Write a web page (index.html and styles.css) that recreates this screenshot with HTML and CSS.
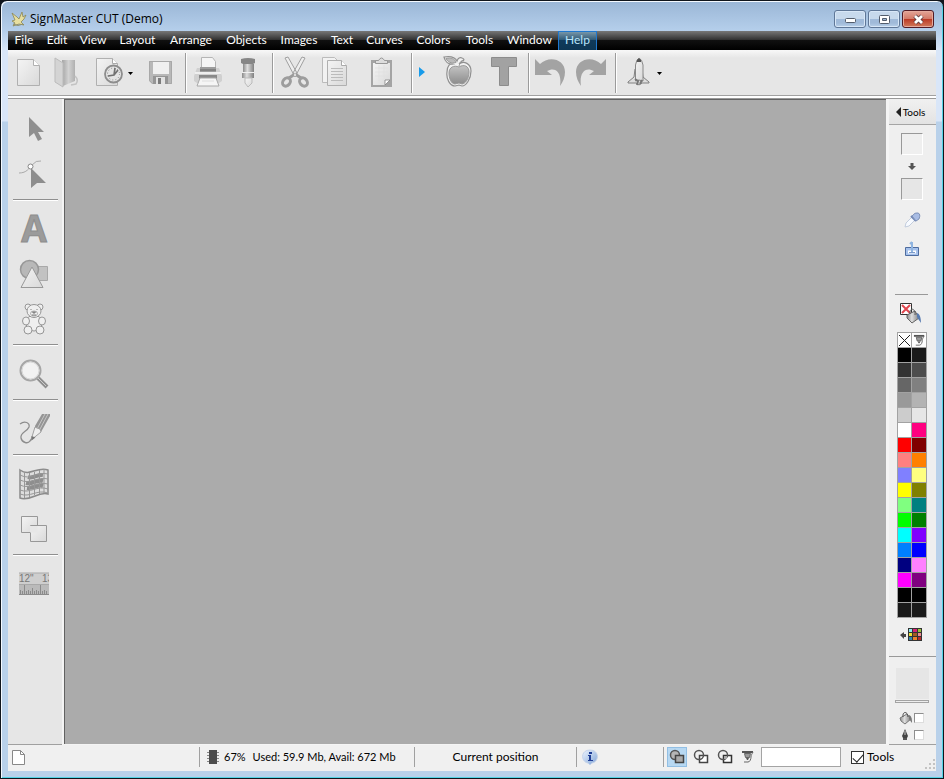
FILE: index.html
```html
<!DOCTYPE html>
<html lang="en">
<head>
<meta charset="utf-8">
<title>SignMaster CUT (Demo)</title>
<link rel="stylesheet" href="styles.css">
</head>
<body>
<svg class="defs" width="0" height="0" aria-hidden="true">
  <defs>
    <linearGradient id="paper" x1="0" y1="0" x2="1" y2="1"><stop offset="0" stop-color="#f4f4f4"/><stop offset="1" stop-color="#d9d9d9"/></linearGradient>
    <linearGradient id="metal" x1="0" y1="0" x2="0" y2="1"><stop offset="0" stop-color="#c4c4c4"/><stop offset="1" stop-color="#8c8c8c"/></linearGradient>
    <linearGradient id="steel" x1="0" y1="0" x2="1" y2="0"><stop offset="0" stop-color="#8a8a8a"/><stop offset=".4" stop-color="#dedede"/><stop offset="1" stop-color="#808080"/></linearGradient>
    <linearGradient id="fold" x1="0" y1="0" x2="1" y2="0"><stop offset="0" stop-color="#a4a4a4"/><stop offset=".5" stop-color="#d2d2d2"/><stop offset="1" stop-color="#b0b0b0"/></linearGradient>
    <linearGradient id="sky" x1="0" y1="0" x2="1" y2="1"><stop offset="0" stop-color="#eef5ff"/><stop offset="1" stop-color="#7fa3d6"/></linearGradient>
    <symbol id="nozzle" viewBox="0 0 14 14"><path d="M1 1h11v2H1z" fill="#555"/><path d="M3.500 3.500h6l-1 4h-4z" fill="#999" stroke="#666"/><path d="M5 8h3l-1 2H6z" fill="#555"/><path d="M12 2c-1 2-2 3-2 5s-1 5-3 5H3" fill="none" stroke="#666"/></symbol>
    <symbol id="bucket" viewBox="0 0 18 16"><path d="M3 7l8-4 4 7-7 5-5-5z" fill="url(#steel)" stroke="#666"/><path d="M6 6c-1-7 6-6 5 1" fill="none" stroke="#555"/><path d="M13 5c3 1 4 5 4 10-2-3-3-4-4-6z" fill="#587bb0"/></symbol>
    <symbol id="bucket-gray" viewBox="0 0 14 14"><path d="M1 7l7-4 4 5-6 5-4-3z" fill="url(#steel)" stroke="#777"/><path d="M4 6c-1-6 5-6 5 0" fill="none" stroke="#555"/><path d="M10 4c3 1 3 5 3 8l-3-4z" fill="#777"/></symbol>
  </defs>
</svg>

<div class="window">
  <header class="titlebar">
    <svg class="app-icon" width="16" height="16" viewBox="0 0 16 16" aria-hidden="true"><path d="M1 2l5 4 2 2 3-7 1 5 3-2-2 4-3 3 3 3-5-1-6 2 2-3-3-2 3-1z" fill="#e8dfa0" stroke="#8c8753" stroke-width=".8"/><path d="M2 13q5 3 10 0" fill="none" stroke="#8f906e"/></svg>
    <h1>SignMaster CUT (Demo)</h1>
    <div class="window-buttons">
      <button type="button" aria-label="Minimize"><svg width="13" height="9" viewBox="0 0 13 9"><rect x="1.500" y="3.500" width="10" height="4" rx="1" fill="#fff" stroke="#535d6c"/></svg></button>
      <button type="button" aria-label="Maximize"><svg width="13" height="9" viewBox="0 0 13 9"><rect x="1.500" y=".5" width="10" height="8" rx="1" fill="#fff" stroke="#535d6c"/><path d="M4.500 3.500h4v2h-4z" fill="#9db6d4" stroke="#535d6c"/></svg></button>
      <button type="button" class="close" aria-label="Close"><svg width="13" height="11" viewBox="0 0 13 11"><path d="M3 2l7 7M10 2L3 9" stroke="#5b3a3e" stroke-width="4.500"/><path d="M3 2l7 7M10 2L3 9" stroke="#fff" stroke-width="2.800"/></svg></button>
    </div>
  </header>

  <nav class="menubar" aria-label="Main menu">
    <button type="button">File</button><button type="button">Edit</button><button type="button">View</button><button type="button">Layout</button><button type="button">Arrange</button><button type="button">Objects</button><button type="button">Images</button><button type="button">Text</button><button type="button">Curves</button><button type="button">Colors</button><button type="button">Tools</button><button type="button">Window</button><button type="button" class="active">Help</button>
  </nav>

  <div class="toolbar" role="toolbar" aria-label="Standard">
    <div class="group g-file">
      <button type="button" aria-label="New"><svg width="28" height="32" viewBox="0 0 28 32"><path d="M3.500 3.500h16l6 6v20h-22z" fill="url(#paper)" stroke="#b0b0b0"/><path d="M19.500 3.500v6h6" fill="#fff" stroke="#b0b0b0"/></svg></button>
      <button type="button" aria-label="Open"><svg width="28" height="32" viewBox="0 0 28 32"><path d="M10 4l13 0v21l-12 5z" fill="url(#fold)"/><path d="M3 2l8 5v24l-8-5z" fill="#d4d4d4" stroke="#bbb"/><path d="M23 20q4 4 1 8l-5 1" fill="none" stroke="#c3c3c3" stroke-width="1.500"/></svg></button>
      <button type="button" aria-label="Recent files"><svg width="44" height="32" viewBox="0 0 44 32"><path d="M4.500 2.500h16l5 5v22h-21z" fill="url(#paper)" stroke="#b0b0b0"/><path d="M20.500 2.500v5h5" fill="#fff" stroke="#aaa"/><circle cx="21.500" cy="18" r="8.500" fill="#e3e3e3" stroke="#8d8d8d" stroke-width="1.800"/><circle cx="21.500" cy="18" r="6" fill="none" stroke="#888" stroke-dasharray="1 2.140"/><path d="M16 20l6-1 4-5M22 19l1-7" fill="none" stroke="#707070" stroke-width="1.700"/><path d="M36 16h5l-2.500 3z" fill="#000"/></svg></button>
      <button type="button" aria-label="Save"><svg width="26" height="32" viewBox="0 0 26 32"><path d="M2 5h23v23H5l-3-3z" fill="#b8b8b8"/><path d="M2.500 5.500h22v22h-19l-3-3z" fill="none" stroke="#a8a8a8"/><path d="M6 6h16v12H6z" fill="#f0f0f0"/><path d="M6 20h15v8H6z" fill="#959595"/><path d="M9 21h9v7H9z" fill="#e2e2e2"/><path d="M11 22h3v6h-3z" fill="#7b7b7b"/></svg></button>
    </div>
    <div class="group g-print">
      <button type="button" aria-label="Print"><svg width="28" height="32" viewBox="0 0 28 32"><path d="M7.500 1.500h11l3 4v8h-14z" fill="#f5f5f5" stroke="#b5b5b5"/><path d="M3 12h22l3 8v5l-3 2H3l-3-2v-5z" fill="#d0d0d0"/><path d="M6 11h16v5H6z" fill="#9d9d9d"/><path d="M6 13h16v2H6z" fill="#818181"/><path d="M1 17h26" stroke="#efefef" stroke-width="2"/><path d="M5 19h18v5H5z" fill="#898989"/><path d="M6 22h16l3 8H3z" fill="#f5f5f5" stroke="#a8a8a8"/><path d="M8 25h12" stroke="#ddd"/></svg></button>
      <button type="button" aria-label="Cut job"><svg width="20" height="32" viewBox="0 0 20 32"><path d="M3 3q7-2 14 0v4l-2 1H5L3 7z" fill="#868686"/><path d="M5 8h11v8H5z" fill="url(#steel)"/><path d="M4 16h12v6H4z" fill="url(#steel)"/><path d="M4 16.500h12" stroke="#efefef"/><path d="M7 22h7v5l-4 4-3-4z" fill="url(#paper)" stroke="#bbb"/></svg></button>
    </div>
    <div class="group g-edit">
      <button type="button" aria-label="Cut"><svg width="30" height="34" viewBox="0 0 30 34"><path d="M5 3l3-1 9 16-2 4zM25 3l-3-1-9 16 2 4z" fill="#eee" stroke="#a0a0a0"/><path d="M15 19l6 4M15 19l-6 4" stroke="#9b9b9b" stroke-width="3"/><ellipse cx="6.500" cy="27" rx="3.500" ry="4.500" transform="rotate(40 6.500 27)" fill="none" stroke="#9d9d9d" stroke-width="3"/><ellipse cx="23.500" cy="27" rx="3.500" ry="4.500" transform="rotate(-40 23.500 27)" fill="none" stroke="#9d9d9d" stroke-width="3"/><circle cx="15" cy="20" r="1.200" fill="#ddd"/></svg></button>
      <button type="button" aria-label="Copy"><svg width="28" height="32" viewBox="0 0 28 32"><path d="M1.500 1.500h12l4 4v21h-16z" fill="#f2f2f2" stroke="#bbb"/><path d="M6.500 4.500h14l5 5v20h-19z" fill="url(#paper)" stroke="#b0b0b0"/><path d="M20.500 4.500v5h5" fill="#fff" stroke="#aaa"/><path d="M10 12.500h12M10 15.500h12M10 18.500h12M10 21.500h12M10 24.500h12" stroke="#bbb"/></svg></button>
      <button type="button" aria-label="Paste"><svg width="24" height="34" viewBox="0 0 24 34"><path d="M2 5h21v27H2z" fill="#a4a4a4"/><path d="M4 8h17v17l-5 5H4z" fill="url(#paper)"/><path d="M21 25h-5v5z" fill="#fff" stroke="#777" stroke-width=".7"/><path d="M6.500 5.500h3q3-5 6 0h3v3h-12z" fill="#ddd" stroke="#999"/><path d="M6 13h13M6 17h13M6 21h13M10 10v16M15 10v14" stroke="#e0e0e0" stroke-width=".7"/></svg></button>
    </div>
    <div class="group g-art">
      <button type="button" aria-label="Expand"><svg width="8" height="12" viewBox="0 0 8 12"><path d="M1 1l6 5-6 5z" fill="#189bea"/></svg></button>
      <button type="button" aria-label="Clip art"><svg width="30" height="34" viewBox="0 0 30 34"><path d="M16 9c5-4 12 0 12 7 0 8-5 15-9 15l-3-1-4 1C7 31 3 24 4 17c0-6 3-9 6-8C5 10 2 6 1 2c6-1 11 0 13 4 1-3 3-4 5-3 3 1 2 3 0 3z" fill="#f1f1f1" stroke="#909090" stroke-width="1.200"/><path d="M3 3.500c5-1 9 0 10 4-5 1-8 0-10-4z" fill="#bbb" stroke="#999"/><path d="M16 12c5-3 10-1 10 5 0 7-4 12-7 12l-3-1-4 1c-4 0-6-6-6-11 0-6 5-8 10-6z" fill="url(#metal)" stroke="#999"/><path d="M16 11q1-5 4-6" fill="none" stroke="#999"/></svg></button>
      <button type="button" aria-label="Text"><svg width="28" height="34" viewBox="0 0 28 34"><path d="M1.500 2.500h25v9h-8v19h-9v-19h-8z" fill="#a2a2a2" stroke="#8c8c8c"/></svg></button>
    </div>
    <div class="group g-history">
      <button type="button" aria-label="Undo"><svg width="32" height="32" viewBox="0 0 32 32"><path d="M1 3l5 5C15-1 31 3 31 16c0 5-2 10-5 14 2-13-4-20-13-15l5 4H1z" fill="#a3a3a3"/></svg></button>
      <button type="button" aria-label="Redo"><svg width="32" height="32" viewBox="0 0 32 32"><path d="M31 3l-5 5C17-1 1 3 1 16c0 5 2 10 5 14-2-13 4-20 13-15l-5 4h17z" fill="#a3a3a3"/></svg></button>
    </div>
    <div class="group g-launch">
      <button type="button" aria-label="Launch"><svg width="44" height="32" viewBox="0 0 44 32"><path d="M13 13l-1 8-6 5v1h8l3 2 3-2h7v-1l-6-5-1-8z" fill="#ddd" stroke="#808080"/><path d="M13.500 25V9q1-6 3.500-7 3 1 4 7v16l-4-1z" fill="url(#paper)" stroke="#888"/><path d="M15 4q2-3 4 0v2h-4z" fill="#555"/><path d="M13 23l3 2-1 4M20 24l-2 4" fill="none" stroke="#777" stroke-width="2"/><path d="M35 16h5l-2.500 3z" fill="#000"/></svg></button>
    </div>
  </div>

  <div class="workspace">
    <aside class="toolbox" aria-label="Drawing tools">
      <div class="set">
        <button type="button" aria-label="Select"><svg width="30" height="32" viewBox="0 0 30 32"><path d="M10 4v20l5-4 4 8 4-2-4-7h6z" fill="#8f8f8f"/></svg></button>
        <button type="button" aria-label="Edit nodes"><svg width="32" height="32" viewBox="0 0 32 32"><path d="M1 15c8 0 10-5 13-8q4-5 9-4" fill="none" stroke="#aaa"/><path d="M13 10v20l6-5h9z" fill="#8d8d8d"/><circle cx="12.500" cy="8.500" r="2.500" fill="#fff" stroke="#888"/></svg></button>
      </div>
      <div class="set">
        <button type="button" aria-label="Text tool"><svg width="40" height="45" viewBox="0 0 40 45"><text x="20" y="36" text-anchor="middle" class="letter">A</text></svg></button>
        <button type="button" aria-label="Shapes"><svg width="30" height="30" viewBox="0 0 30 30"><path d="M16.500 7.500h12v14h-12z" fill="#c2c2c2" stroke="#a9a9a9"/><circle cx="10.500" cy="10.500" r="9" fill="#b8b8b8" stroke="#989898" stroke-width="1.500"/><path d="M13 8L2 28.500h22z" fill="url(#paper)" stroke="#989898"/></svg></button>
        <button type="button" aria-label="Symbols"><svg width="24" height="32" viewBox="0 0 24 32"><g fill="#efefef" stroke="#969696"><circle cx="6" cy="4" r="3"/><circle cx="18" cy="4" r="3"/><ellipse cx="12" cy="20" rx="8" ry="8"/><ellipse cx="4" cy="18" rx="3.500" ry="4"/><ellipse cx="20" cy="18" rx="3.500" ry="4"/><ellipse cx="6" cy="27" rx="4" ry="4"/><ellipse cx="18" cy="27" rx="4" ry="4"/><ellipse cx="12" cy="8" rx="7" ry="6.500"/></g><ellipse cx="12" cy="10.500" rx="3.500" ry="2.500" fill="none" stroke="#aaa"/><path d="M10.500 9h3L12 10.500zM8.500 6.500h1M14.500 6.500h1M10 12h4" fill="#888" stroke="#808080"/></svg></button>
      </div>
      <div class="set">
        <button type="button" aria-label="Zoom"><svg width="32" height="32" viewBox="0 0 32 32"><path d="M20 20l9 9" stroke="#8f8f8f" stroke-width="4"/><path d="M20 20l8 8" stroke="#ccc" stroke-width="1"/><circle cx="12.500" cy="12.500" r="10" fill="#f2f2f2" stroke="#a6a6a6" stroke-width="2"/><circle cx="12.500" cy="12.500" r="8.500" fill="none" stroke="#d5d5d5"/></svg></button>
      </div>
      <div class="set">
        <button type="button" aria-label="Freehand"><svg width="32" height="32" viewBox="0 0 32 32"><path d="M2 11c5-4 10-1 9 3-2 5-9 5-8 11 1 5 7 6 9 3l3-4" fill="none" stroke="#8d8d8d" stroke-width="1.300"/><path d="M17 13L24 1h8v2l-9 16-6-2z" fill="#959595"/><path d="M27 1l-8 15M30 1l-9 17" stroke="#c6c6c6"/><path d="M17 14l-4 13 10-8-1-3-3-1z" fill="#eee" stroke="#a0a0a0"/><path d="M13.500 23v4.500l4-3z" fill="#777"/></svg></button>
      </div>
      <div class="set">
        <button type="button" aria-label="Distort"><svg width="32" height="32" viewBox="0 0 32 32"><path d="M2 2c10 7 17-4 28 0v24c-10-3-18 8-28 4z" fill="#dedede" stroke="#8b8b8b" stroke-width="1.500"/><path d="M10 9c6 2 9-3 15-2M8 15c7 2 11-4 17-2M9 20c7 1 10-4 16-2" fill="none" stroke="#8e8e8e" stroke-width="4"/><path d="M2 7c11 6 17-4 28-1M2 12c10 5 17-4 28-1M2 17c10 5 17-4 28-1M2 22c10 4 17-5 28-1M2 26c10 4 17-5 28-1M6.500 4v26M11.500 5v24M16.500 4v23M21.500 2v24M26 1v24" fill="none" stroke="#979797"/></svg></button>
        <button type="button" aria-label="Weld"><svg width="30" height="30" viewBox="0 0 30 30"><path d="M2.500 2.500h16v16h-16z" fill="url(#paper)" stroke="#989898"/><path d="M11.500 11.500h16v16h-16z" fill="url(#paper)" stroke="#989898"/><path d="M11 12v6.500h7.500V12z" fill="#e7e7e7"/></svg></button>
      </div>
      <div class="set last">
        <button type="button" aria-label="Measure"><svg width="30" height="24" viewBox="0 0 30 24"><path d="M0 1h30v22H0z" fill="#cecece"/><path d="M0 1h30M0 12.500h30" stroke="#a9a9a9"/><path d="M0 13h30v10H0z" fill="#bababa"/><text x="0" y="10" class="ruler-text">12"</text><text x="23" y="10" class="ruler-text">13</text><path d="M1.500 18v4M3.500 19v3M5.500 13v9M7.500 19v3M9.500 18v4M11.500 19v3M13.500 16v6M15.500 19v3M17.500 18v4M19.500 19v3M21.500 13v9M23.500 19v3M25.500 18v4M27.500 19v3M0 22.500h30" stroke="#8b8b8b"/></svg></button>
      </div>
    </aside>

    <main class="canvas" aria-label="Drawing area"></main>

    <aside class="palette-panel" aria-label="Color tools">
      <button type="button" class="panel-title"><svg width="5" height="10" viewBox="0 0 5 10"><path d="M5 0v10L0 5z" fill="#222"/></svg>Tools</button>
      <div class="pick">
        <button type="button" class="well" aria-label="Outline color"></button>
        <svg width="10" height="9" viewBox="0 0 10 9" aria-hidden="true"><path d="M3.500 1h3v3H9L5 8 1 4h2.500z" fill="#555"/></svg>
        <button type="button" class="well filled" aria-label="Fill color"></button>
        <button type="button" class="tool" aria-label="Eyedropper"><svg width="18" height="18" viewBox="0 0 18 18"><path d="M2 16l1-4 6-6 3 3-6 6z" fill="#f7faff" stroke="#c3cddd"/><path d="M8 5l5 5" stroke="#7186b5" stroke-width="2"/><path d="M9 5q3-4 6-3t1 6l-3 2z" fill="#a8bce4" stroke="#7f92b8"/></svg></button>
        <button type="button" class="tool" aria-label="Swap colors"><svg width="16" height="16" viewBox="0 0 16 16"><path d="M1.500 6.500h13v8h-13z" fill="#a5c1ec" stroke="#4e6c9e"/><path d="M4 11h8" stroke="#fff" stroke-width="3"/><path d="M8 1v10M6 3l2-2" stroke="#8fb4e0" stroke-width="2"/><path d="M5 11.500h6" stroke="#7b9bcb"/></svg></button>
      </div>
      <div class="fill-tools">
        <button type="button" class="tool" aria-label="No fill"><svg width="24" height="24" viewBox="0 0 24 24"><path d="M1.500 1.500h11v11h-11z" fill="#fff" stroke="#333"/><path d="M3 3l8 8M11 3l-8 8" stroke="#e0454e" stroke-width="2"/><use href="#bucket" x="5" y="6" width="18" height="16"/></svg></button>
        <div class="swatches" id="swatches">
          <button type="button" aria-label="None"><svg width="13" height="13" viewBox="0 0 13 13"><path d="M1 1l11 11M12 1L1 12" stroke="#222"/></svg></button>
          <button type="button" aria-label="Contour"><svg width="13" height="13"><use href="#nozzle"/></svg></button>
        </div>
        <button type="button" class="tool more" aria-label="More colors"><svg width="22" height="14" viewBox="0 0 22 14"><path d="M0 7l4-3v2h2v3H4v2z" fill="#444"/><path d="M8 0h14v13H8z" fill="#333"/><path d="M9 1h3v3H9z" fill="#8ee8ee"/><path d="M13 1h4v3h-4z" fill="#d42470"/><path d="M18 1h3v3h-3z" fill="#9ac43e"/><path d="M9 5h3v3H9z" fill="#eee334"/><path d="M13 5h4v3h-4z" fill="#a05d24"/><path d="M18 5h3v3h-3z" fill="#ed8a94"/><path d="M9 9h3v3H9z" fill="#3485ac"/><path d="M13 9h4v3h-4z" fill="#ec822a"/><path d="M18 9h3v3h-3z" fill="#b62b2a"/></svg></button>
      </div>
      <div class="current">
        <div class="preview"></div>
        <div class="bar"></div>
        <label><svg width="14" height="14"><use href="#bucket-gray"/></svg><input type="checkbox" aria-label="Fill"></label>
        <label><svg width="14" height="14" viewBox="0 0 14 14"><path d="M6 1l3 7-1 2H4L3 8z" fill="#444"/><path d="M6 3v4" stroke="#ccc"/><path d="M4 10h4v2H4z" fill="#555"/></svg><input type="checkbox" aria-label="Outline"></label>
      </div>
    </aside>
  </div>

  <footer class="statusbar">
    <div class="cell doc"><svg width="14" height="17" viewBox="0 0 14 17"><path d="M.5 1.500h8l4 4v10H.5z" fill="#fff" stroke="#888"/><path d="M8.500 1.500v4h4" fill="none" stroke="#888"/></svg></div>
    <div class="cell memory"><svg width="12" height="16" viewBox="0 0 12 16"><path d="M0 3.500h12M0 6.500h12M0 9.500h12M0 12.500h12" stroke="#888"/><path d="M2 1h8v14H2z" fill="#4d4d4d"/></svg><span class="percent">67%</span><span>Used: 59.9 Mb, Avail: 672 Mb</span></div>
    <div class="cell position">Current position</div>
    <div class="cell info"><svg width="16" height="17" viewBox="0 0 16 17"><path d="M8 1c10 0 9 12 2 13l-2 2-2-2C-1 13-2 1 8 1z" fill="url(#sky)" stroke="#c5d3ea"/><path d="M7 3h3v2H7zM6 6h3v5h2v1H6v-1h1V7H6z" fill="#203f96"/></svg></div>
    <div class="cell controls">
      <button type="button" class="on" aria-label="Overlap"><svg width="16" height="16" viewBox="0 0 16 16"><circle cx="6" cy="6" r="4.500" fill="#b5b5b5" stroke="#555" stroke-width="1.500"/><path d="M6.500 6.500h8v7h-8z" fill="#aaa" stroke="#444" stroke-width="1.500"/></svg></button>
      <button type="button" aria-label="Outline overlap"><svg width="16" height="16" viewBox="0 0 16 16"><path d="M6.500 6.500h8v7h-8z" fill="#fff" stroke="#444" stroke-width="1.500"/><circle cx="6" cy="6" r="4.500" fill="none" stroke="#555" stroke-width="1.500"/></svg></button>
      <button type="button" aria-label="Combined overlap"><svg width="16" height="16" viewBox="0 0 16 16"><path d="M6.500 6.500h8v7h-8z" fill="#fff" stroke="#333" stroke-width="1.500"/><circle cx="6" cy="6" r="4.500" fill="none" stroke="#555" stroke-width="1.500"/><path d="M7 7h3v3H7z" fill="#aaa"/></svg></button>
      <button type="button" class="narrow" aria-label="Contour"><svg width="14" height="14"><use href="#nozzle"/></svg></button>
      <input type="text" aria-label="Value">
      <label class="check"><input type="checkbox" checked><span>Tools</span></label>
    </div>
    <svg class="grip" width="10" height="10" viewBox="0 0 10 10" aria-hidden="true"><path d="M8 0h2v2H8zM4 4h2v2H4zM8 4h2v2H8zM0 8h2v2H0zM4 8h2v2H4zM8 8h2v2H8z" fill="#c3c3c3"/></svg>
  </footer>
</div>
<script src="script.js"></script>
</body>
</html>
```
FILE: styles.css
```css
* { box-sizing: border-box; }

body {
  margin: 0;
  background: #10151c;
  color: #000;
  font: 12px/16px Lato, "Liberation Sans", sans-serif;
}

button, input { font: inherit; color: inherit; }

button {
  display: flex;
  align-items: center;
  justify-content: center;
  margin: 0;
  padding: 0;
  border: 0;
  background: none;
}

svg { display: block; flex: none; }
.defs { position: absolute; }

.window {
  display: flex;
  flex-direction: column;
  min-height: 100vh;
  padding: 0 6px 7px 6px;
  border: 1px solid #10151c;
  border-radius: 7px 7px 0 0;
  background: linear-gradient(#9ab6d6 0, #b5cfeb 30px, #d9e6f8 50px, #d9e6f8 120px, #b9d1ea 121px);
  box-shadow: inset 1px 1px #f4f9ff, inset -1px -1px #54d3e5;
}

.titlebar {
  display: flex;
  align-items: center;
  height: 30px;
  padding: 6px 3px 0 4px;
}
.titlebar h1 {
  flex: 1;
  margin: 0 0 0 3px;
  font: 12px/16px "Open Sans", "Noto Sans", sans-serif;
}
.window-buttons { display: flex; gap: 2px; }
.window-buttons button {
  width: 32px;
  height: 18px;
  border: 1px solid #5f7797;
  border-radius: 3px;
  background: linear-gradient(#c7d9ec 0 50%, #a0bad9 50% 75%, #b9d1e9);
  box-shadow: inset 0 0 0 1px #d8e7f7;
}
.window-buttons .close {
  border-color: #521b25;
  background: linear-gradient(#e3a497 0, #d37967 50%, #bb3824 50%, #d07a5b);
  box-shadow: inset 0 0 0 1px #e5aa9d;
}

.menubar {
  display: grid;
  grid-template-columns: 32px 34px 38px 51px 56px 55px 50px 36px 49px 49px 43px 57px 39px;
  justify-content: start;
  height: 19px;
  margin: 0 1px;
  background: linear-gradient(#777 0, #333 45%, #111 46%, #000);
  color: #fff;
}
.menubar button { padding-bottom: 2px; border: 1px solid transparent; }
.menubar .active {
  border-color: #1f78cf;
  background: linear-gradient(#7896a8 0, #2d5876 45%, #103a5b 46%, #0d3654);
  color: #b9e4fa;
}

.toolbar {
  display: flex;
  align-items: center;
  height: 46px;
  margin: 0 1px;
  border-bottom: 1px solid #a1a1a1;
  background: linear-gradient(#f8f8f8 0, #e6e6e6 8px);
}
.group {
  display: grid;
  height: 40px;
  padding-bottom: 2px;
  border-right: 1px solid #9b9b9b;
  box-shadow: 1px 0 #fff;
}
.g-file { grid-template-columns: 40px 36px 60px 32px; width: 178px; }
.g-print { grid-template-columns: 44px 36px; width: 87px; }
.g-edit { grid-template-columns: 44px 36px 56px; width: 139px; }
.g-art { grid-template-columns: 20px 52px 40px; width: 117px; }
.g-history { grid-template-columns: 42px 40px; width: 87px; }
.g-launch { grid-template-columns: 56px; border: 0; box-shadow: none; }

.workspace {
  display: flex;
  flex: 1;
  margin: 0 1px;
  padding-top: 3px;
  background: linear-gradient(#fff 0 2px, #999 2px 3px, #f4f4f4 3px);
}

.toolbox {
  width: 54px;
  padding: 2px 4px 0 5px;
  border-bottom: 1px solid #a0a0a0;
  background: #e6e6e6;
}
.set {
  padding: 5px 0 3px;
  border-bottom: 1px solid #8f8f8f;
  box-shadow: 0 1px #fff;
}
.set.last { border: 0; box-shadow: none; }
.set button { width: 100%; height: 45px; padding-right: 3px; }
.set + .set { padding-top: 6px; }
.letter { font: bold 37px "Open Sans", sans-serif; fill: #9b9b9b; stroke: #8d8d8d; }
.ruler-text { font: 10px "Liberation Sans", sans-serif; fill: #777; }

.canvas {
  flex: 1;
  margin: 0 3px 1px 2px;
  border: solid #626262;
  border-width: 1px 0 0 1px;
  background: #ababab;
}

.palette-panel {
  display: flex;
  flex-direction: column;
  width: 47px;
  padding-top: 1px;
  border-bottom: 1px solid #a0a0a0;
  background: #efefef;
}
.panel-title {
  gap: 2px;
  height: 25px;
  padding-right: 4px;
  border-bottom: 1px solid #a5a5a5;
  background: linear-gradient(#f0f0f0, #e3e3e3);
  font-size: 10px;
}
.pick {
  display: flex;
  flex-direction: column;
  align-items: center;
  gap: 7px;
  height: 170px;
  margin: 0 8px 0 6px;
  padding-top: 8px;
  border-bottom: 1px solid #999;
}
.well {
  width: 22px;
  height: 22px;
  border: 1px solid;
  border-color: #999 #fff #fff #999;
}
.filled { background: #e6e6e6; }
.tool { width: 24px; height: 24px; }
.pick .tool { height: 22px; }
.filled + .tool { margin-top: 2px; }
.fill-tools {
  display: flex;
  flex: 1;
  flex-direction: column;
  align-items: center;
  padding: 7px 3px 0 0;
  border-bottom: 1px solid #999;
}
.swatches {
  display: grid;
  grid-template-columns: 13px 14px;
  grid-auto-rows: 14px;
  gap: 1px;
  width: 30px;
  margin: 6px 0 0 2px;
  padding: 1px;
  background: #a2a2a2;
}
.swatches button { background: #fff; }
.more { margin-top: 5px; }
.current {
  display: flex;
  flex-direction: column;
  align-items: center;
  height: 87px;
  padding: 11px 1px 0 0;
}
.preview { width: 33px; height: 31px; background: #e6e6e6; }
.bar { width: 34px; height: 3px; margin: 1px 0 6px; border: 1px solid #a3a3a3; background: #eee; }
.current label { display: flex; align-items: center; gap: 1px; height: 17px; padding-right: 2px; }
.current input {
  appearance: none;
  width: 10px;
  height: 10px;
  margin: 0;
  border: 1px solid;
  border-color: #8e8e8e #ddd #ddd #8e8e8e;
  background: #fff;
}

.statusbar {
  display: flex;
  align-items: center;
  height: 26px;
  margin: 0 1px;
  padding-bottom: 2px;
  background: #f0f0f0;
}
.cell {
  display: flex;
  align-items: center;
  height: 20px;
  border-right: 1px solid #a0a0a0;
}
.doc { width: 192px; padding-left: 4px; }
.memory { width: 215px; padding-left: 7px; font-size: 11px; }
.percent { margin: 0 7px 0 5px; }
.position { width: 162px; justify-content: center; }
.info { flex: 1; padding-left: 5px; }
.controls { width: 261px; padding-left: 3px; gap: 4px; border: 0; }
.controls button { width: 20px; height: 20px; }
.controls .narrow { width: 18px; }
.controls .on { background: #b7d8f2; box-shadow: inset 0 0 0 1px #92bfe4; }
.controls input[type="text"] {
  width: 80px;
  height: 20px;
  padding: 0 3px;
  border: 1px solid #a4a4a4;
  background: #fff;
}
.check { display: flex; align-items: center; gap: 3px; margin-left: 6px; }
.check input {
  display: flex;
  justify-content: center;
  appearance: none;
  width: 13px;
  height: 13px;
  margin: 0;
  border: 1px solid #333;
  background: #fff;
}
.check input:checked::after {
  content: "";
  width: 5px;
  height: 9px;
  border: solid #222;
  border-width: 0 1px 1px 0;
  transform: rotate(42deg);
}
.grip { align-self: flex-end; margin: 0 1px 0 0; }
```
FILE: script.js
```js
const colors = [
  "#000", "#1a1a1a", "#333", "#4d4d4d", "#666", "#808080",
  "#999", "#b3b3b3", "#ccc", "#e6e6e6", "#fff", "#ff0080",
  "#f00", "#800000", "#ff8080", "#ff8000", "#8080ff", "#ffff80",
  "#ff0", "#808000", "#80ff80", "#008080", "#0f0", "#008000",
  "#0ff", "#8000ff", "#0080ff", "#00f", "#000080", "#ff80ff",
  "#f0f", "#800080", "#000", "#000", "#1a1a1a", "#1a1a1a"
];

const swatches = document.getElementById("swatches");
for (const color of colors) {
  const swatch = document.createElement("button");
  swatch.type = "button";
  swatch.ariaLabel = color;
  swatch.style.background = color;
  swatches.append(swatch);
}
```
